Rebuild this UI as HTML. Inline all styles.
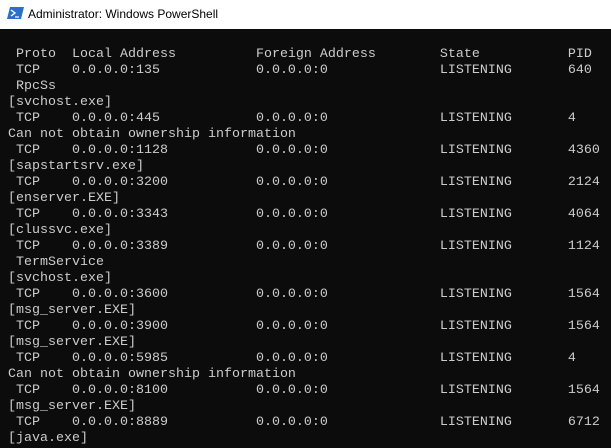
<!DOCTYPE html>
<html><head><style>
html,body{margin:0;padding:0;width:611px;height:448px;overflow:hidden;background:#0c0c0c}
.tb{position:absolute;left:0;top:0;width:611px;height:29px;background:#fff}
.tb span{position:absolute;left:28px;top:7px;font:12px "Liberation Sans",sans-serif;color:#000}
pre{position:absolute;left:8px;top:47px;margin:0;font:13.33px/16px "Liberation Mono",monospace;color:#cccccc;white-space:pre}
</style></head><body>
<div class="tb">
<svg style="position:absolute;left:7px;top:7px" width="17" height="12" viewBox="0 0 17 12"><polygon points="3,0 17,0 14,12 0,12" fill="#2b6fc7"/><polyline points="4,3 8,6 4,9" fill="none" stroke="#fff" stroke-width="1.4"/><line x1="8" y1="10" x2="12" y2="10" stroke="#fff" stroke-width="1.2"/></svg>
<span>Administrator: Windows PowerShell</span></div>
<pre> Proto  Local Address          Foreign Address        State           PID
 TCP    0.0.0.0:135            0.0.0.0:0              LISTENING       640
 RpcSs
[svchost.exe]
 TCP    0.0.0.0:445            0.0.0.0:0              LISTENING       4
Can not obtain ownership information
 TCP    0.0.0.0:1128           0.0.0.0:0              LISTENING       4360
[sapstartsrv.exe]
 TCP    0.0.0.0:3200           0.0.0.0:0              LISTENING       2124
[enserver.EXE]
 TCP    0.0.0.0:3343           0.0.0.0:0              LISTENING       4064
[clussvc.exe]
 TCP    0.0.0.0:3389           0.0.0.0:0              LISTENING       1124
 TermService
[svchost.exe]
 TCP    0.0.0.0:3600           0.0.0.0:0              LISTENING       1564
[msg_server.EXE]
 TCP    0.0.0.0:3900           0.0.0.0:0              LISTENING       1564
[msg_server.EXE]
 TCP    0.0.0.0:5985           0.0.0.0:0              LISTENING       4
Can not obtain ownership information
 TCP    0.0.0.0:8100           0.0.0.0:0              LISTENING       1564
[msg_server.EXE]
 TCP    0.0.0.0:8889           0.0.0.0:0              LISTENING       6712
[java.exe]</pre>
</body></html>
